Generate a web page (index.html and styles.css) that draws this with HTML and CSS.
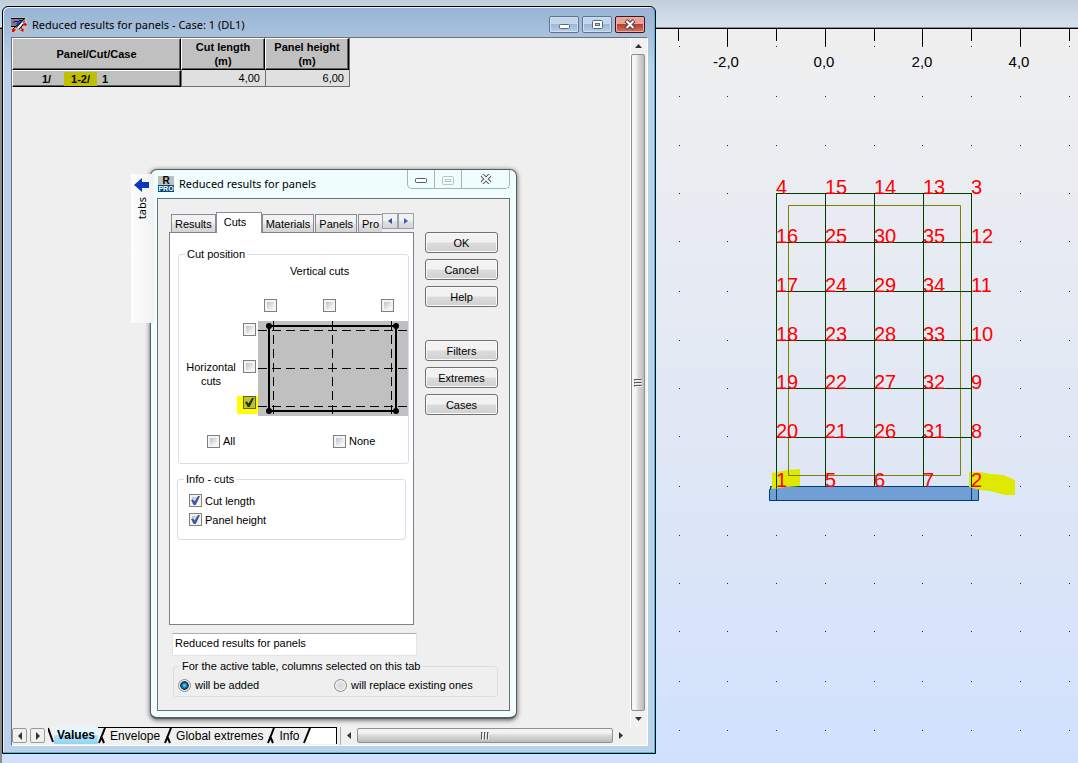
FILE: index.html
```html
<!DOCTYPE html>
<html lang="en">
<head>
<meta charset="utf-8">
<title>Reduced results for panels</title>
<link rel="stylesheet" href="styles.css">
</head>
<body>
<main class="desktop">
  <div class="app-band"></div>
  <svg class="model" aria-label="Panel mesh view">
    <defs>
      <pattern id="dots" x="679" y="46" width="195" height="195" patternUnits="userSpaceOnUse">
        <path fill="#1414d8" d="M0 0h1v1h-1zM48 0h1v1h-1zM97 0h1v1h-1zM146 0h1v1h-1zM0 50h1v1h-1zM48 50h1v1h-1zM97 50h1v1h-1zM146 50h1v1h-1zM0 99h1v1h-1zM48 99h1v1h-1zM97 99h1v1h-1zM146 99h1v1h-1zM0 147h1v1h-1zM48 147h1v1h-1zM97 147h1v1h-1zM146 147h1v1h-1z"/>
      </pattern>
    </defs>
    <rect x="660" y="40" width="100%" height="100%" fill="url(#dots)"/>
    <path class="ticks" d="M678.500 29v12M727.500 29v17M776.500 29v12M825.500 29v17M874.500 29v12M922.500 29v17M971.500 29v12M1020.500 29v17M1069.500 29v12"/>
    <g class="scale">
      <text x="726" y="67">-2,0</text><text x="824" y="67">0,0</text><text x="922" y="67">2,0</text><text x="1019" y="67">4,0</text>
    </g>
    <path class="inner" d="M788.500 205.500H960.500V475.500H788.500z"/>
    <path class="support" d="M770.500 486.500H977.500V487.500H978.500V500.500H769.500V489.500H770.500zM776.500 486V500M971.500 486V500"/>
    <path class="mesh" d="M776.500 193.500H971.500M776.500 242.500H971.500M776.500 291.500H971.500M776.500 340.500H971.500M776.500 388.500H971.500M776.500 437.500H971.500M776.500 193V486M825.500 193V486M874.500 193V486M923.500 193V486M971.500 193V486"/>
    <path fill="#dfe800" d="M772 473L788 470L800 469V486L786 487L772 489zM969 472H980L990 474L1003 475L1015 480V495H1005L990 491L980 490L969 487z"/>
    <path class="inner" d="M800 475.500H788.500V469"/>
    <path class="mesh" d="M776.500 470V488M971.500 472V487"/>
    <g class="nodes">
      <text x="776" y="194">4</text><text x="825" y="194">15</text><text x="874" y="194">14</text><text x="923" y="194">13</text><text x="971" y="194">3</text>
      <text x="776" y="243">16</text><text x="825" y="243">25</text><text x="874" y="243">30</text><text x="923" y="243">35</text><text x="971" y="243">12</text>
      <text x="776" y="292">17</text><text x="825" y="292">24</text><text x="874" y="292">29</text><text x="923" y="292">34</text><text x="971" y="292">11</text>
      <text x="776" y="341">18</text><text x="825" y="341">23</text><text x="874" y="341">28</text><text x="923" y="341">33</text><text x="971" y="341">10</text>
      <text x="776" y="389">19</text><text x="825" y="389">22</text><text x="874" y="389">27</text><text x="923" y="389">32</text><text x="971" y="389">9</text>
      <text x="776" y="438">20</text><text x="825" y="438">21</text><text x="874" y="438">26</text><text x="923" y="438">31</text><text x="971" y="438">8</text>
      <text x="776" y="487">1</text><text x="825" y="487">5</text><text x="874" y="487">6</text><text x="923" y="487">7</text><text x="971" y="487">2</text>
    </g>
  </svg>

  <section class="window" aria-label="Reduced results for panels - Case: 1 (DL1)">
    <header class="titlebar">
      <svg class="app-icon" width="16" height="16" viewBox="0 0 16 16"><path fill="#c0c0c0" d="M0 0h16v16H0z"/><path fill="#808080" d="M0 1h14v8H0z"/><path d="M0 1.500h14M0 9.500h5" stroke="#000"/><path d="M2 5.500L4 4.500H8L5 7.500M9 9l3 4M11 3.500h-3" stroke="#00f" fill="none"/><path d="M1 13L13 2" stroke="#000" stroke-width="1"/><path d="M6.500 11.500L12 5.500" stroke="#000" stroke-width="4"/><path d="M6.500 11.500L12 5.500" stroke="#fff" stroke-width="2"/><path fill="#f00" d="M1 12l4 0-2 3H1zM9 13l4-1-1 3zM11 7h5v1h-5zM14 6h1v3h-1z"/></svg>
      <h1>Reduced results for panels - Case: 1 (DL1)</h1>
      <div class="caption">
        <button type="button" aria-label="Minimize"><svg width="28" height="15"><rect x="9.500" y="7.500" width="10" height="4" rx="1" fill="#fff" stroke="#536b87"/></svg></button>
        <button type="button" aria-label="Maximize"><svg width="28" height="15"><rect x="9.500" y="3.500" width="10" height="8" rx="1" fill="#fff" stroke="#536b87"/><rect x="12.500" y="6.500" width="4" height="2" fill="#b4cce4" stroke="#536b87"/></svg></button>
        <button type="button" class="close" aria-label="Close"><svg width="28" height="15"><path d="M10 3.500L18 11.500M18 3.500L10 11.500" stroke="#55404a" stroke-width="4"/><path d="M10.500 4L17.500 11M17.500 4L10.500 11" stroke="#fff" stroke-width="2"/></svg></button>
      </div>
    </header>
    <div class="client">
      <div class="sheet">
        <table>
          <thead><tr><th>Panel/Cut/Case</th><th>Cut length<br>(m)</th><th>Panel height<br>(m)</th></tr></thead>
          <tbody><tr><th scope="row"><span class="cell"><span>1/</span><mark>1-2/</mark><span>1</span></span></th><td>4,00</td><td>6,00</td></tr></tbody>
        </table>
      </div>
      <div class="vscroll">
        <button type="button" aria-label="Scroll up"><svg width="7" height="4"><path d="M0 4L3.500 0L7 4z" fill="#333"/></svg></button>
        <div class="thumb"><i></i><i></i><i></i></div>
        <button type="button" aria-label="Scroll down"><svg width="7" height="4"><path d="M0 0L3.500 4L7 0z" fill="#333"/></svg></button>
      </div>
      <nav class="sheetbar">
        <button type="button" class="step" aria-label="Previous sheet"><svg width="4" height="8"><path d="M4 0L0 4L4 8z" fill="#333"/></svg></button>
        <button type="button" class="step" aria-label="Next sheet"><svg width="4" height="8"><path d="M0 0L4 4L0 8z" fill="#333"/></svg></button>
        <svg class="slash" width="6" height="16"><path d="M0 1L5 15"/></svg>
        <button type="button" class="tab current">Values</button>
        <div class="others">
          <svg class="slash" width="8" height="16"><path d="M1 15L7 0M3 8L6 15"/></svg>
          <button type="button" class="tab">Envelope</button>
          <svg class="slash" width="8" height="16"><path d="M1 15L7 0M3 8L6 15"/></svg>
          <button type="button" class="tab">Global extremes</button>
          <svg class="slash" width="8" height="16"><path d="M1 15L7 0M3 8L6 15"/></svg>
          <button type="button" class="tab">Info</button>
          <svg class="slash end" width="34" height="16"><path class="blank" d="M1 16L7 0H34V16z"/><path d="M1 15L7 0"/></svg>
        </div>
        <div class="hscroll">
          <button type="button" aria-label="Scroll left"><svg width="4" height="7"><path d="M4 0L0 3.500L4 7z" fill="#333"/></svg></button>
          <div class="thumb"><i></i><i></i><i></i></div>
          <button type="button" aria-label="Scroll right"><svg width="4" height="7"><path d="M0 0L4 3.500L0 7z" fill="#333"/></svg></button>
        </div>
      </nav>
    </div>
  </section>

  <section class="dialog" role="dialog" aria-label="Reduced results for panels">
    <aside class="side-note">
      <svg width="16" height="14"><path d="M0 7L8 0V4H15V10H8V14z" fill="#0a3ab8"/></svg>
      <span>tabs</span>
    </aside>
    <header class="dialog-title">
      <span class="logo"><b>R</b><b>PRO</b></span>
      <h2>Reduced results for panels</h2>
      <div class="dialog-caption">
        <button type="button" aria-label="Minimize"><svg width="12" height="5"><rect x=".5" y=".5" width="11" height="4" rx="1" fill="#fff" stroke="#555566"/></svg></button>
        <button type="button" aria-label="Maximize" disabled><svg width="12" height="9"><rect x=".5" y=".5" width="11" height="8" rx="1" fill="none" stroke="#b8c4c4"/><rect x="3.500" y="3.500" width="5" height="2" fill="none" stroke="#b8c4c4"/></svg></button>
        <button type="button" class="wide" aria-label="Close"><svg width="12" height="10"><path d="M2 1L10 9M10 1L2 9" stroke="#555566" stroke-width="4"/><path d="M2 1L10 9M10 1L2 9" stroke="#fff" stroke-width="2"/></svg></button>
      </div>
    </header>
    <form class="dialog-body">
      <div class="upper">
        <div class="tabs">
          <div class="tablist" role="tablist">
            <button type="button" role="tab">Results</button>
            <button type="button" role="tab" aria-selected="true" class="selected">Cuts</button>
            <button type="button" role="tab">Materials</button>
            <button type="button" role="tab">Panels</button>
            <button type="button" role="tab" class="cut-off">Pro</button>
            <button type="button" class="spin" aria-label="Tabs left"><svg width="4" height="6"><path d="M4 0L0 3L4 6z" fill="#3c4c9c"/></svg></button>
            <button type="button" class="spin" aria-label="Tabs right"><svg width="4" height="6"><path d="M0 0L4 3L0 6z" fill="#3c5cc8"/></svg></button>
          </div>
          <div class="page">
            <fieldset class="position">
              <legend>Cut position</legend>
              <div class="vertical-label">Vertical cuts</div>
              <div class="vertical-checks">
                <input type="checkbox" aria-label="Left vertical cut"><input type="checkbox" aria-label="Middle vertical cut"><input type="checkbox" aria-label="Right vertical cut">
              </div>
              <div class="cut-grid">
                <div class="horizontal-label">Horizontal<br>cuts</div>
                <div class="horizontal-checks">
                  <input type="checkbox" aria-label="Top horizontal cut"><input type="checkbox" aria-label="Middle horizontal cut"><span class="highlight"><input type="checkbox" checked aria-label="Bottom horizontal cut"></span>
                </div>
                <svg width="150" height="95"><path fill="#c0c0c0" d="M0 0h150v95H0z"/><path fill="none" stroke="#000" stroke-dasharray="9 5" d="M0 9.500H150M0 47.500H150M0 85.500H150M15.500 0V95M74.500 0V95M133.500 0V95"/><path fill="none" stroke="#000" stroke-width="2" d="M11 5H138V90H11z"/><g><circle cx="11" cy="5" r="3"/><circle cx="138" cy="5" r="3"/><circle cx="11" cy="90" r="3"/><circle cx="138" cy="90" r="3"/></g></svg>
              </div>
              <div class="all-none">
                <label><input type="checkbox">All</label>
                <label><input type="checkbox">None</label>
              </div>
            </fieldset>
            <fieldset class="info">
              <legend>Info - cuts</legend>
              <label><input type="checkbox" checked>Cut length</label>
              <label><input type="checkbox" checked>Panel height</label>
            </fieldset>
          </div>
        </div>
        <div class="actions">
          <button type="button">OK</button>
          <button type="button">Cancel</button>
          <button type="button">Help</button>
          <button type="button" class="second">Filters</button>
          <button type="button">Extremes</button>
          <button type="button">Cases</button>
        </div>
      </div>
      <input class="name" type="text" value="Reduced results for panels" aria-label="Name">
      <fieldset class="mode">
        <legend>For the active table, columns selected on this tab</legend>
        <label><input type="radio" name="mode" checked>will be added</label>
        <label><input type="radio" name="mode">will replace existing ones</label>
      </fieldset>
    </form>
  </section>
</main>
</body>
</html>
```
FILE: styles.css
```css
* { box-sizing: border-box; }
html, body { height: 100%; }
body {
  margin: 0;
  font: 11px/14px "Liberation Sans", Arial, sans-serif;
  color: #000;
  overflow: hidden;
}
h1, h2 { margin: 0; font: 11px/16px "Noto Sans", sans-serif; white-space: nowrap; }
button { font: inherit; color: inherit; margin: 0; padding: 0; border: 0; background: none; }
svg { display: block; flex: none; }

.desktop {
  position: relative;
  height: 100%;
  min-height: 740px;
  background: linear-gradient(#efefef 28px, #e1e8f4 55%, #d1e1fd);
  border-left: 2px solid #8c8c8c;
}
.app-band {
  height: 29px;
  margin-left: -2px;
  background: linear-gradient(#c1cfdb, #d6e2f0);
  border-bottom: 1px solid #000;
  box-shadow: inset 0 -1px #8c8c8c;
}

/* Model view */
.model { position: absolute; top: 0; left: -2px; width: calc(100% + 2px); height: 100%; }
.ticks { stroke: #000; }
.scale { font-size: 15px; text-anchor: middle; }
.inner { fill: none; stroke: #808000; }
.mesh { fill: none; stroke: #003c00; }
.support { fill: #719fd6; stroke: #003c78; }
.nodes { font-size: 20px; fill: #ff0000; }

/* Results window */
.window {
  position: absolute;
  top: 6px;
  bottom: 9px;
  left: 0;
  width: 654px;
  display: flex;
  flex-direction: column;
  padding: 0 7px 7px 8px;
  border: 1px solid #000;
  border-radius: 6px 6px 0 0;
  background: linear-gradient(#98b4d2, #b9d1ea 60px);
  box-shadow: inset -1px -1px #22c8ea, inset 1px 1px #e4f0fa;
}
.titlebar { display: flex; align-items: center; gap: 5px; height: 30px; padding: 5px 3px 0 0; }
.titlebar h1 { flex: 1; }
.caption { display: flex; gap: 3px; }
.caption button {
  width: 30px;
  height: 17px;
  border: 1px solid #5d7590;
  border-radius: 2px;
  background: linear-gradient(#c4d7ea 45%, #9cb8d6 50%, #b8d0ea);
  box-shadow: inset 0 0 0 1px #d0e0f0;
}
.caption .close {
  border-color: #4c1018;
  background: linear-gradient(#e6a498 45%, #b8402c 50%, #d07860);
  box-shadow: inset 0 0 0 1px #e8b0a4;
}
.client {
  flex: 1;
  display: grid;
  grid-template: 1fr 18px / 1fr 17px;
  min-height: 0;
  background: #efefef;
  border: 1px solid #707070;
  border-right-color: #fff;
  border-bottom-color: #fff;
}
.sheet table { border-collapse: separate; border-spacing: 0; table-layout: fixed; width: 338px; font-size: 11px; border-right: 1px solid #707070; }
.sheet th, .sheet td { padding: 0; height: 17px; width: 84px; }
.sheet th {
  background: #c0c0c0;
  border: 1px solid #fff;
  border-right-color: #000;
  border-bottom-color: #000;
  box-shadow: inset -1px -1px #606060;
}
.sheet thead th { height: 32px; }
.sheet th:first-child { width: 169px; }
.sheet td { background: #e0e0e0; border: 1px solid #707070; border-width: 0 0 1px 1px; text-align: right; padding-right: 5px; }
.cell { display: grid; grid-template-columns: 51px 33px 1fr; height: 14px; text-align: left; line-height: 14px; }
.cell span:first-child { padding-left: 29px; }
.cell span:last-child { padding-left: 5px; }
.cell mark { background: #c0c000; color: inherit; text-align: center; }
.vscroll { display: flex; flex-direction: column; background: #f0f0f0; border-left: 1px solid #fff; }
.vscroll button { height: 16px; margin-right: 2px; display: grid; place-items: center; }
.thumb { flex: 1; display: flex; align-items: center; justify-content: center; gap: 1px; border: 1px solid #909090; border-radius: 2px; }
.vscroll .thumb { flex-direction: column; margin-right: 2px; background: linear-gradient(90deg, #f6f6f6 30%, #dadada 50%, #bcbcc0); }
.thumb i { background: #555; border: 1px solid #555; border-right-color: #eee; border-bottom-color: #eee; }
.vscroll i { width: 8px; height: 2px; }
.hscroll i { width: 2px; height: 8px; }
.sheetbar { grid-column: 1 / 3; display: flex; font-size: 12px; background: #f0f0f0; padding-right: 18px; }
.step { width: 15px; height: 15px; margin: 1px 3px 0 0; border: 1px solid #9a9a9a; border-radius: 2px; display: grid; place-items: center; }
.slash { fill: none; stroke: #000; stroke-width: 2; }
.slash.end { border-right: 1px solid #000; }
.blank { fill: #fff; stroke: none; }
.tab { height: 16px; line-height: 16px; padding: 0 4px; }
.current { height: 17px; font-weight: 700; line-height: 17px; padding: 0 3px; background: linear-gradient(#e4f6fe 45%, #b4e2f8 50%, #90d4f4); }
.others { display: flex; height: 17px; border-top: 1px solid #000; }
.hscroll { flex: 1; display: flex; margin-left: 3px; border-left: 1px solid #aaa; }
.hscroll button { width: 16px; height: 16px; display: grid; place-items: center; }
.hscroll .thumb { margin: 1px 0 2px; background: linear-gradient(#f2f2f2 30%, #dadada 50%, #bcbcbc); }

/* Dialog */
.dialog {
  position: absolute;
  top: 169px;
  left: 148px;
  width: 367px;
  padding: 0 6px 6px;
  border: 1px solid #5a5e60;
  border-bottom-width: 2px;
  border-radius: 7px;
  background: #effdfd;
  box-shadow: 0 1px 5px rgba(0, 0, 0, .65);
}
.dialog-title { display: flex; align-items: flex-start; gap: 5px; height: 28px; padding-left: 1px; }
.logo, .dialog-title h2 { margin-top: 6px; }
.logo { width: 16px; background: linear-gradient(#bfbfbf 9px, #004a80 9px); text-align: center; }
.logo b { display: block; font-size: 10px; line-height: 9px; }
.logo b + b { font-size: 7px; line-height: 7px; color: #fff; }
.dialog-title h2 { flex: 1; }
.dialog-caption { display: flex; height: 19px; border: 1px solid #a8b4b4; border-top: 0; border-radius: 0 0 5px 5px; }
.dialog-caption button { width: 27px; padding-top: 2px; display: grid; place-items: center; border-right: 1px solid #a8b4b4; }
.dialog-caption .wide { width: 47px; padding: 0; border: 0; }
.side-note {
  position: absolute;
  top: 4px;
  left: -20px;
  width: 23px;
  height: 149px;
  display: flex;
  flex-direction: column;
  align-items: center;
  gap: 5px;
  padding: 4px 2px 0 0;
  background: linear-gradient(90deg, #fdfdfd, #f0f2f2);
}
.side-note span { writing-mode: vertical-rl; transform: rotate(180deg); font: 11px/14px "Noto Sans", sans-serif; }
.dialog-body { border: 1px solid #6c7272; background: #efefef; padding: 12px 11px 13px; }
.upper { display: flex; justify-content: space-between; }
.tabs { flex: 0 0 244px; }
.tablist { display: flex; align-items: flex-end; height: 21px; padding-left: 2px; }
.tablist button { height: 18px; padding: 0 3px; border: 1px solid #8c8c98; border-bottom: 0; background: linear-gradient(#f2f2f2 45%, #e2e2e2 55%, #d4d4d4); margin-right: 1px; white-space: nowrap; }
.tablist .selected { height: 21px; width: 46px; padding: 0 7px 2px; margin: 0 0 -1px -1px; text-align: left; background: #fff; position: relative; z-index: 1; }
.tablist .cut-off { border-right: 0; flex: 1; min-width: 0; overflow: hidden; margin-right: 0; text-align: left; }
.tablist .spin { flex: none; width: 16px; height: 16px; padding: 0; margin: 0 0 3px; border: 1px solid #a0a0ac; display: grid; place-items: center; }
.page { height: 393px; border: 1px solid #80808c; background: #fff; padding: 14px 4px 0 8px; }
fieldset { margin: 0; padding: 0; border: 1px solid #d4dfe8; border-radius: 3px; min-width: 0; }
legend { margin-left: 6px; padding: 0 2px; line-height: 14px; }
label { display: flex; align-items: center; gap: 3px; }
.position { height: 217px; }
.vertical-label { margin: 3px 0 0 52px; text-align: center; }
.vertical-checks { display: flex; justify-content: space-between; margin: 21px 14px 0 85px; }
.cut-grid { display: grid; grid-template-columns: 64px 15px 1fr; margin-top: 9px; }
.horizontal-label { text-align: center; align-self: center; margin-top: 10px; }
.horizontal-checks { display: flex; flex-direction: column; justify-content: space-between; padding: 2px 0 7px; }
.highlight { margin: 0 -1px -5px -6px; padding: 0 0 5px 6px; background: #ffff00; }
.all-none { display: grid; grid-template-columns: 126px 1fr; margin: 18px 0 0 28px; }
.info { margin: 8px 3px 0 -1px; padding: 5px 0 10px 11px; }
.info legend { margin-left: -5px; }
.info label { height: 19px; }

input[type="checkbox"] {
  appearance: none;
  display: grid;
  place-items: center;
  width: 13px;
  height: 13px;
  margin: 0;
  border: 1px solid #808080;
  background: linear-gradient(135deg, #a8b2c0, #fafafa 80%);
  box-shadow: inset 0 0 0 2px #f4f4f4;
}
input[type="checkbox"]:checked::after {
  content: "";
  width: 9px;
  height: 9px;
  background: #3c559c;
  clip-path: polygon(0 45%, 22% 38%, 40% 62%, 78% 0, 100% 0, 52% 100%, 30% 100%);
}
.highlight input[type="checkbox"] { background: #c4c420; box-shadow: none; border-color: #606020; }
.highlight input[type="checkbox"]:checked::after { background: #26300c; }
input[type="radio"] {
  appearance: none;
  width: 13px;
  height: 13px;
  margin: 0;
  border: 1px solid #8a8a8a;
  border-radius: 50%;
  background: radial-gradient(#d4d4d4, #f6f6f6);
  box-shadow: inset 0 0 0 1px #f4f4f4;
}
input[type="radio"]:checked { background: radial-gradient(circle, #38c4f0 1px, #10507c 3px, #0c3050 4px, #eee 5px); }

.actions { display: flex; flex-direction: column; gap: 6px; width: 73px; padding-top: 21px; }
.actions button {
  height: 21px;
  border: 1px solid #707070;
  border-radius: 3px;
  background: linear-gradient(#f2f2f2 48%, #dcdcdc 52%, #d0d0d0);
  box-shadow: inset 0 0 0 1px #fafafa;
}
.actions .second { margin-top: 27px; }
.name {
  display: block;
  width: 245px;
  height: 23px;
  margin: 8px 0 3px 3px;
  padding: 0 3px 3px 2px;
  border: 1px solid #e2e3ea;
  border-top-color: #abadb3;
  background: #fff;
  color: #000;
  font: inherit;
}
.mode { display: grid; grid-template-columns: 156px 1fr; margin-left: 4px; padding: 5px 0 4px 4px; }
.mode legend { margin-left: 2px; }
.mode label { gap: 4px; }
```
